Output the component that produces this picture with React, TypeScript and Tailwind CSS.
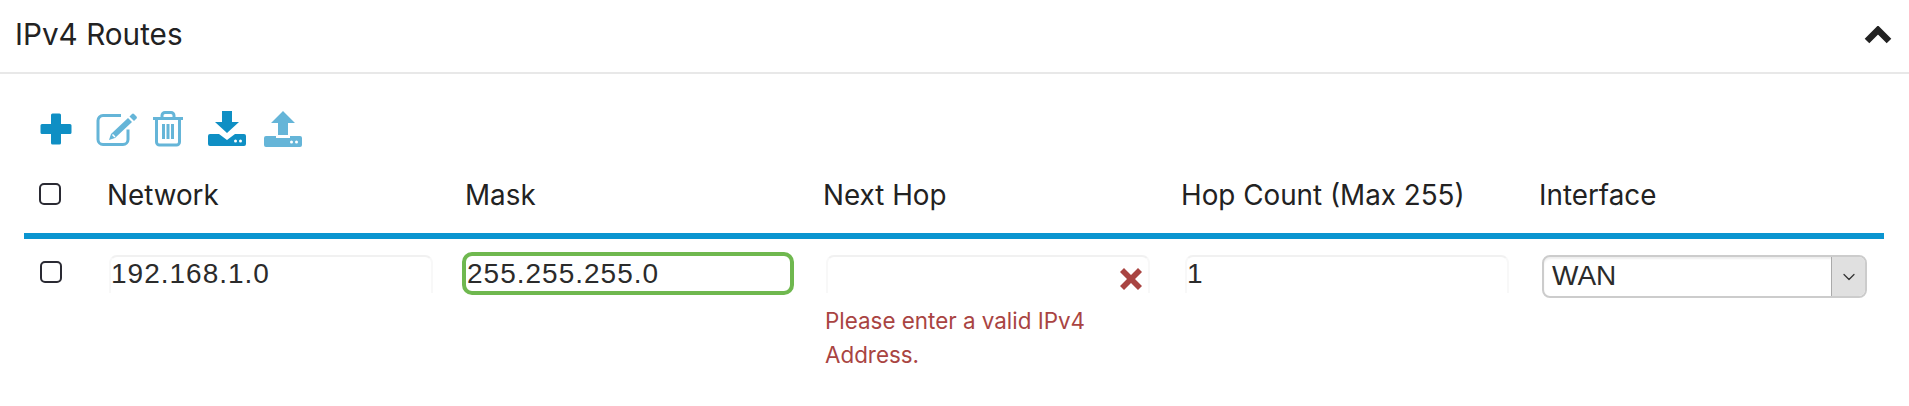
import { ChevronDown } from "lucide-react";

const columns = ["Network", "Mask", "Next Hop", "Hop Count (Max 255)", "Interface"];

const DARK = "#0f8fc4";
const LIGHT = "#65b5d8";

function PlusIcon() {
  return (
    <svg width="32" height="32" viewBox="0 0 32 32" className="block">
      <path d="M11 2a1.500 1.500 0 0 1 1.500-1.500h7A1.500 1.500 0 0 1 21 2v9h9a1.500 1.500 0 0 1 1.500 1.500v7a1.500 1.500 0 0 1-1.500 1.500h-9v9a1.500 1.500 0 0 1-1.500 1.500h-7A1.500 1.500 0 0 1 11 30v-9H2a1.500 1.500 0 0 1-1.500-1.500v-7A1.500 1.500 0 0 1 2 11h9z" fill={DARK} />
    </svg>
  );
}

function EditIcon() {
  return (
    <svg width="42" height="34" viewBox="0 0 42 34" className="block">
      <path d="M25 3.500H7A5 5 0 0 0 2 8.500v19a5 5 0 0 0 5 5h20a5 5 0 0 0 5-5v-10" fill="none" stroke={LIGHT} strokeWidth="3" />
      <path d="M15 22l17-16 4 4-17 16-6 2z" fill={LIGHT} />
      <path d="M33.500 4.500l2.500-2.500a1.500 1.500 0 0 1 2 0l2.500 2.500a1.500 1.500 0 0 1 0 2l-2.500 2.500z" fill={LIGHT} />
      <path d="M16.500 22.500l2.500 2.500" stroke="#fff" strokeWidth="1.500" />
    </svg>
  );
}

function TrashIcon() {
  return (
    <svg width="32" height="36" viewBox="0 0 32 36" className="block">
      <path d="M1 7.500h30" stroke={LIGHT} strokeWidth="3" />
      <path d="M10 7V4.500a3 3 0 0 1 3-3h6a3 3 0 0 1 3 3V7" fill="none" stroke={LIGHT} strokeWidth="3" />
      <path d="M4.500 8v23a3 3 0 0 0 3 3h17a3 3 0 0 0 3-3V8" fill="none" stroke={LIGHT} strokeWidth="3" />
      <path d="M10 13h3v15h-3zM14.500 13h3v15h-3zM19 13h3v15h-3z" fill={LIGHT} />
    </svg>
  );
}

function DownloadIcon() {
  return (
    <svg width="38" height="35" viewBox="0 0 38 35" className="block">
      <path d="M14 0h10v11h7L19 22 7 11h7z" fill={DARK} />
      <path d="M2 23h9l8 6 8-6h9a2 2 0 0 1 2 2v8a2 2 0 0 1-2 2H2a2 2 0 0 1-2-2v-8a2 2 0 0 1 2-2z" fill={DARK} />
      <circle cx="27.500" cy="30" r="1.500" fill="#fff" />
      <circle cx="32.500" cy="30" r="1.500" fill="#fff" />
    </svg>
  );
}

function UploadIcon() {
  return (
    <svg width="38" height="36" viewBox="0 0 38 36" className="block">
      <path d="M19 0l12 12h-7v12H14V12H7z" fill={LIGHT} />
      <path d="M2 25h10v2h14v-2h10a2 2 0 0 1 2 2v7a2 2 0 0 1-2 2H2a2 2 0 0 1-2-2v-7a2 2 0 0 1 2-2z" fill={LIGHT} />
      <circle cx="27.500" cy="31" r="1.500" fill="#fff" />
      <circle cx="32.500" cy="31" r="1.500" fill="#fff" />
    </svg>
  );
}

function Checkbox() {
  return <div className="w-[22px] h-[22px] rounded-[5px] border-2 border-[#2a2a33] bg-white" />;
}

function TextCell({ value }: { value: string }) {
  return (
    <div className="w-[324px] h-[38px] rounded-t-[8px] border-2 border-b-0 border-t-[#f1f1f1] border-x-[#f8f8f8] font-['Liberation_Sans',sans-serif] tracking-[1px] text-[28px] leading-[33px] text-[#2b2b2b]">
      {value}
    </div>
  );
}

export default function App() {
  return (
    <div className="w-[1909px] h-[406px] bg-white overflow-hidden font-['Inter',sans-serif] text-[#222]">
      {/* Title */}
      <div className="h-[74px] flex items-center justify-between pl-[15px] pr-[17px] pb-[3px] border-b-2 border-[#e8e8e8]">
        <h2 className="text-[29.7px] font-normal">IPv4 Routes</h2>
        <svg width="28" height="18" viewBox="0 0 28 18">
          <path d="M3 15L14 4l11 11" fill="none" stroke="#222" strokeWidth="6.500" />
        </svg>
      </div>

      {/* Toolbar */}
      <div className="flex items-center pl-[40px] mt-[36px] h-[37px]">
        <PlusIcon />
        <div className="ml-[24px]"><EditIcon /></div>
        <div className="ml-[14px]"><TrashIcon /></div>
        <div className="ml-[24px]"><DownloadIcon /></div>
        <div className="ml-[18px]"><UploadIcon /></div>
      </div>

      {/* Table head */}
      <div className="ml-[24px] w-[1860px] mt-[31px] h-[61px] border-b-[6px] border-[#0b95d0] flex items-start">
        <div className="w-[83px] shrink-0 pl-[15px] pt-[5px]"><Checkbox /></div>
        {columns.map((col, i) => (
          <div key={col} className={i === 4 ? "text-[27.8px] leading-[34px] whitespace-nowrap" : "w-[358px] shrink-0 text-[27.8px] leading-[34px] whitespace-nowrap"}>
            {col}
          </div>
        ))}
      </div>

      {/* Row */}
      <div className="ml-[24px] w-[1860px] pt-[16px] flex items-start">
        <div className="w-[85px] shrink-0 pl-[16px] pt-[6px]"><Checkbox /></div>
        <div className="w-[353px] shrink-0"><TextCell value="192.168.1.0" /></div>
        <div className="w-[364px] shrink-0 -mt-[3px]">
          <div className="w-[332px] h-[43px] rounded-[10px] border-4 border-[#6fb84f] font-['Liberation_Sans',sans-serif] tracking-[1px] text-[28px] leading-[36px] text-[#2b2b2b] pl-[1px]">
            255.255.255.0
          </div>
        </div>
        <div className="w-[359px] shrink-0">
          <div className="relative w-[324px]">
            <TextCell value="" />
            <svg width="24" height="24" viewBox="0 0 24 24" className="absolute right-[7px] top-[12px]">
              <path d="M5 1l7 7 7-7 4 4-7 7 7 7-4 4-7-7-7 7-4-4 7-7-7-7z" fill="#a94442" />
            </svg>
          </div>
          <p className="w-[300px] mt-[11px] -ml-[1px] text-[22.4px] leading-[34px] text-[#a94442]">
            Please enter a valid IPv4 Address.
          </p>
        </div>
        <div className="w-[357px] shrink-0"><TextCell value="1" /></div>
        <div className="w-[325px] h-[43px] flex rounded-[8px] border-2 border-[#ccc] overflow-hidden shadow-[inset_0_2px_2px_#eee]">
          <div className="flex-1 pl-[8px] font-['Liberation_Sans',sans-serif] text-[28px] leading-[38px] text-[#2b2b2b]">WAN</div>
          <div className="w-[34px] flex items-center justify-center bg-[#e0e0e0] border-l border-[#aaa]">
            <ChevronDown size={20} strokeWidth={1.5} color="#333" />
          </div>
        </div>
      </div>
    </div>
  );
}
